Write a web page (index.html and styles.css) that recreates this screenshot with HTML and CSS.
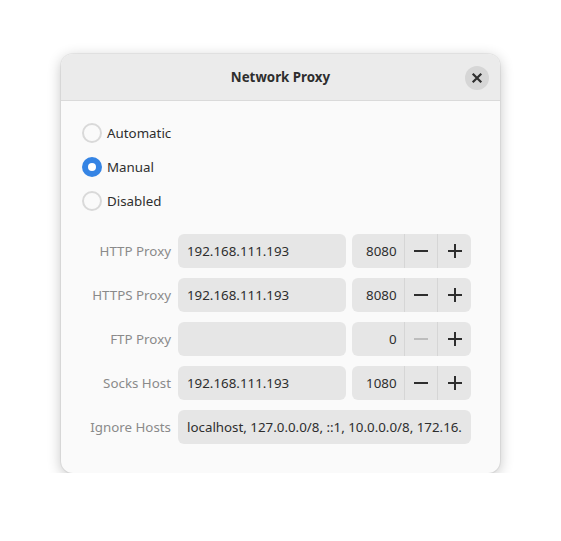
FILE: index.html
```html
<!DOCTYPE html>
<html>
<head>
<meta charset="utf-8">
<link rel="stylesheet" href="styles.css">
</head>
<body>
<div class="window">
  <div class="header">
    <div class="title">Network Proxy</div>
    <button class="close" aria-label="Close">
      <svg width="16" height="16" viewBox="0 0 16 16"><path d="M4.5 4.5l7 7M11.5 4.5l-7 7" stroke="#2e2e2e" stroke-width="2.2" stroke-linecap="square" fill="none"/></svg>
    </button>
  </div>
  <div class="content">
    <div class="radios">
      <div class="radio-row"><span class="radio"></span><span>Automatic</span></div>
      <div class="radio-row"><span class="radio checked"></span><span>Manual</span></div>
      <div class="radio-row"><span class="radio"></span><span>Disabled</span></div>
    </div>
    <div class="grid">
      <div class="label">HTTP Proxy</div>
      <div class="entry">192.168.111.193</div>
      <div class="spin">
        <div class="spin-value">8080</div>
        <div class="spin-btn"><svg width="16" height="16" viewBox="0 0 16 16"><path d="M1 8h14" stroke="#2e2e2e" stroke-width="2" fill="none"/></svg></div>
        <div class="spin-btn"><svg width="16" height="16" viewBox="0 0 16 16"><path d="M1 8h14M8 1v14" stroke="#2e2e2e" stroke-width="2" fill="none"/></svg></div>
      </div>

      <div class="label">HTTPS Proxy</div>
      <div class="entry">192.168.111.193</div>
      <div class="spin">
        <div class="spin-value">8080</div>
        <div class="spin-btn"><svg width="16" height="16" viewBox="0 0 16 16"><path d="M1 8h14" stroke="#2e2e2e" stroke-width="2" fill="none"/></svg></div>
        <div class="spin-btn"><svg width="16" height="16" viewBox="0 0 16 16"><path d="M1 8h14M8 1v14" stroke="#2e2e2e" stroke-width="2" fill="none"/></svg></div>
      </div>

      <div class="label">FTP Proxy</div>
      <div class="entry"></div>
      <div class="spin">
        <div class="spin-value">0</div>
        <div class="spin-btn"><svg width="16" height="16" viewBox="0 0 16 16"><path d="M1 8h14" stroke="#bdbdbd" stroke-width="2" fill="none"/></svg></div>
        <div class="spin-btn"><svg width="16" height="16" viewBox="0 0 16 16"><path d="M1 8h14M8 1v14" stroke="#2e2e2e" stroke-width="2" fill="none"/></svg></div>
      </div>

      <div class="label">Socks Host</div>
      <div class="entry">192.168.111.193</div>
      <div class="spin">
        <div class="spin-value">1080</div>
        <div class="spin-btn"><svg width="16" height="16" viewBox="0 0 16 16"><path d="M1 8h14" stroke="#2e2e2e" stroke-width="2" fill="none"/></svg></div>
        <div class="spin-btn"><svg width="16" height="16" viewBox="0 0 16 16"><path d="M1 8h14M8 1v14" stroke="#2e2e2e" stroke-width="2" fill="none"/></svg></div>
      </div>

      <div class="label">Ignore Hosts</div>
      <div class="entry wide">localhost, 127.0.0.0/8, ::1, 10.0.0.0/8, 172.16.</div>
    </div>
  </div>
</div>
</body>
</html>
```

FILE: styles.css
```css
html, body {
  margin: 0;
  padding: 0;
  background: #ffffff;
}
body {
  padding: 54px 0 0 61px;
  font-family: "Noto Sans", "DejaVu Sans", sans-serif;
  font-size: 13.333px;
  color: #2e2e2e;
}
.window {
  width: 439px;
  height: 419px;
  background: #fafafa;
  border-radius: 12px;
  box-shadow: 0 0 0 1px rgba(0,0,0,0.05), 0 3px 14px rgba(0,0,0,0.24);
  overflow: hidden;
  display: flex;
  flex-direction: column;
}
.header {
  height: 46px;
  background: #ebebeb;
  border-bottom: 1px solid #dadada;
  display: flex;
  align-items: center;
  justify-content: center;
  position: relative;
  flex: none;
}
.title {
  font-weight: bold;
  font-size: 13.333px;
  color: #2e2e2e;
}
.close {
  position: absolute;
  right: 11px;
  top: 12px;
  width: 24px;
  height: 24px;
  border-radius: 50%;
  border: none;
  padding: 0;
  background: #d6d6d6;
  display: flex;
  align-items: center;
  justify-content: center;
}
.content {
  padding: 15px 30px 0 21px;
}
.radios {
  display: flex;
  flex-direction: column;
}
.radio-row {
  height: 34px;
  display: flex;
  align-items: center;
  gap: 5px;
}
.radio {
  width: 20px;
  height: 20px;
  box-sizing: border-box;
  border: 2px solid #d9d9d9;
  border-radius: 50%;
  background: #fafafa;
  display: flex;
  align-items: center;
  justify-content: center;
}
.radio.checked {
  border: none;
  background: #3584e4;
}
.radio.checked::after {
  content: "";
  width: 8px;
  height: 8px;
  border-radius: 50%;
  background: #ffffff;
}
.grid {
  margin-top: 16px;
  margin-left: 9px;
  display: grid;
  grid-template-columns: 80px 168px 118px;
  column-gap: 7px;
  row-gap: 10px;
  grid-auto-rows: 34px;
}
.grid > .spin {
  margin-left: -1px;
}
.label {
  color: #8a8a8a;
  text-align: right;
  display: flex;
  align-items: center;
  justify-content: flex-end;
  white-space: nowrap;
}
.entry {
  background: #e6e6e6;
  border-radius: 6px;
  padding: 0 9px;
  display: flex;
  align-items: center;
  white-space: nowrap;
  overflow: hidden;
}
.entry.wide {
  grid-column: 2 / 4;
}
.spin {
  background: #e6e6e6;
  border-radius: 6px;
  display: flex;
  align-items: stretch;
  overflow: hidden;
}
.spin-value {
  width: 52px;
  box-sizing: border-box;
  padding-right: 7px;
  display: flex;
  align-items: center;
  justify-content: flex-end;
}
.spin-btn {
  width: 33px;
  border-left: 1px solid #d6d6d6;
  display: flex;
  align-items: center;
  justify-content: center;
}
```
